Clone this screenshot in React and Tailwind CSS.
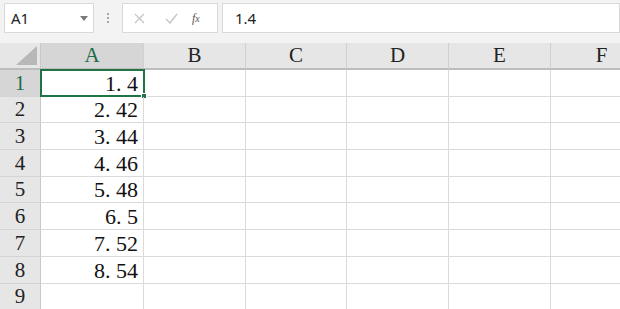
import React from "react";

const cols = ["A", "B", "C", "D", "E", "F"];
const values = ["1.4", "2.42", "3.44", "4.46", "5.48", "6.5", "7.52", "8.54", ""];

function Num({ v }) {
  const [a, b] = v.split(".");
  return (
    <span className="whitespace-nowrap">
      {a}
      <span className="inline-block w-[0.5em]">.</span>
      {b}
    </span>
  );
}

export default function App() {
  return (
    <div className="w-[620px] h-[309px] overflow-hidden bg-white" style={{ fontFamily: "'Liberation Serif', serif" }}>
      {/* toolbar */}
      <div className="h-[43px] bg-[#f3f3f3] flex items-start pt-[3px] pl-[4px] gap-0" style={{ fontFamily: "'Noto Sans', 'Liberation Sans', sans-serif" }}>
        <div className="w-[90px] h-[30px] bg-white border border-[#dadada] flex items-center justify-between pl-[6px] pr-[5px]">
          <span className="text-[15px] text-[#222]">A1</span>
          <svg width="8" height="5" viewBox="0 0 8 5"><path d="M0 0h8L4 5z" fill="#7a7a7a" /></svg>
        </div>
        <div className="w-[28px] h-[30px] flex flex-col items-center justify-center gap-[2px]">
          <span className="w-[2px] h-[2px] bg-[#a8a8a8]" />
          <span className="w-[2px] h-[2px] bg-[#a8a8a8]" />
          <span className="w-[2px] h-[2px] bg-[#a8a8a8]" />
        </div>
        <div className="w-[96px] h-[30px] bg-white border border-[#dadada] flex items-center">
          <svg className="ml-[11px]" width="11" height="11" viewBox="0 0 11 11"><path d="M1 1l9 9M10 1l-9 9" stroke="#c4c4c4" strokeWidth="1.2" /></svg>
          <svg className="ml-[20px]" width="13" height="11" viewBox="0 0 13 11"><path d="M1 6l4 4 7-9" stroke="#c4c4c4" strokeWidth="1.4" fill="none" /></svg>
          <span className="ml-[14px] text-[12px] italic text-[#555]" style={{ fontFamily: "'Liberation Serif', serif" }}>
            f<span className="text-[10px]">x</span>
          </span>
        </div>
        <div className="ml-[4px] flex-1 h-[30px] bg-white border border-[#dadada] flex items-center pl-[12px]">
          <span className="text-[15px] text-[#222]">1.4</span>
        </div>
      </div>
      {/* grid */}
      <div
        className="grid"
        style={{
          gridTemplateColumns: "41px 103px 102px 101px 102px 102px 102px",
          gridTemplateRows: "27px repeat(9, 26.7px)",
        }}
      >
        {/* corner */}
        <div className="bg-[#e6e6e6] border-r border-[#c8c8c8] border-b-2 border-b-[#bdbdbd] relative">
          <svg className="absolute right-[3px] bottom-[3px]" width="21" height="19" viewBox="0 0 21 19"><path d="M21 0V19H0z" fill="#b8b8b8" /></svg>
        </div>
        {cols.map((c, i) => (
          <div
            key={c}
            className={
              "flex items-end justify-center border-r border-[#d0d0d0] border-b-2 text-[21px] leading-[25px] " +
              (i === 0 ? "bg-[#d6d6d6] text-[#1d6b4a] border-b-[#bdbdbd]" : "bg-[#e6e6e6] text-[#222] border-b-[#bdbdbd]")
            }
          >
            {c}
          </div>
        ))}
        {values.map((v, r) => (
          <React.Fragment key={r}>
            <div
              className={
                "flex items-end justify-center border-r border-[#c8c8c8] border-b border-b-[#d4d4d4] text-[21px] leading-[25px] " +
                (r === 0 ? "bg-[#d6d6d6] text-[#1d6b4a]" : "bg-[#e6e6e6] text-[#222]")
              }
            >
              {r + 1}
            </div>
            <div className="relative flex items-end justify-end pr-[5px] border-r border-b border-[#dadada] text-[22px] leading-[25px] text-[#111]">
              {v && <Num v={v} />}
              {r === 0 && (
                <div className="absolute left-[-1px] top-[-1px] right-[-2px] bottom-[-1px] border-2 border-[#217346] pointer-events-none">
                  <div className="absolute right-[-4px] bottom-[-4px] w-[6px] h-[6px] bg-[#217346] border border-white" />
                </div>
              )}
            </div>
            {cols.slice(1).map((c) => (
              <div key={c} className="border-r border-b border-[#dadada]" />
            ))}
          </React.Fragment>
        ))}
      </div>
    </div>
  );
}
